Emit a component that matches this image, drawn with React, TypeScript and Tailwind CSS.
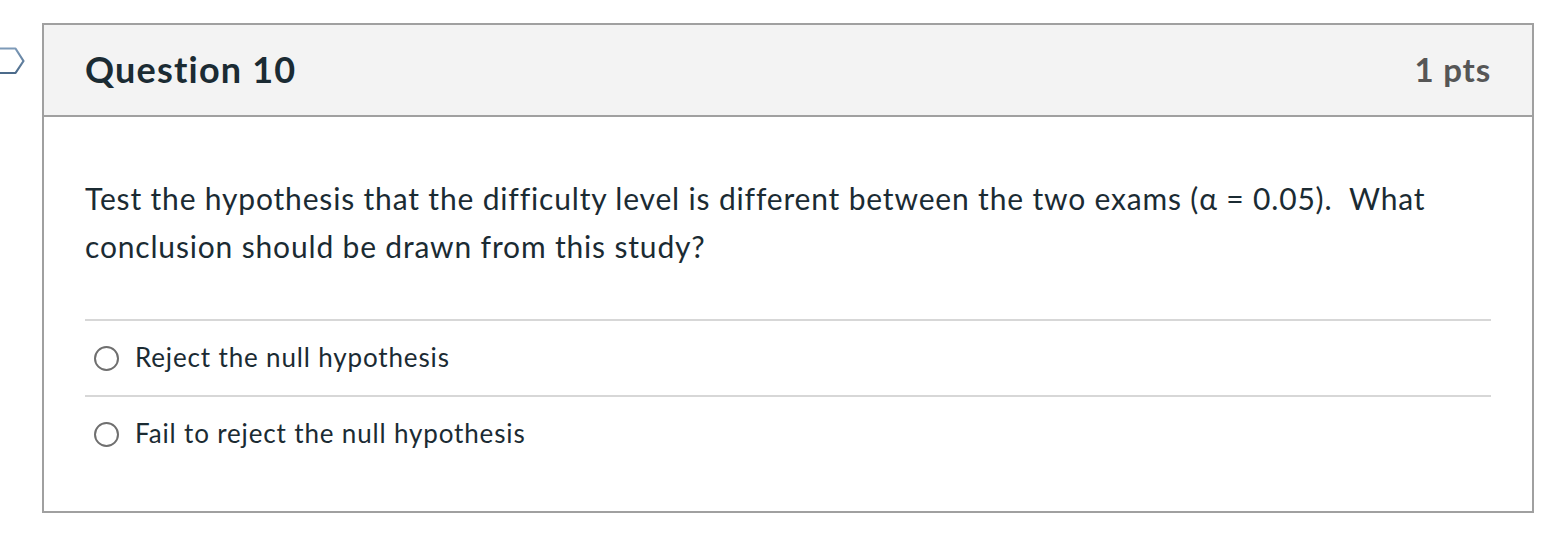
import React from "react";

function Radio() {
  return (
    <span className="flex h-[25px] w-[25px] shrink-0 items-center justify-center rounded-full border-2 border-[#6f6f6f] bg-white" />
  );
}

function Option({ label }: { label: string }) {
  return (
    <div className="flex h-[76px] items-center gap-[16px] border-t-2 border-[#d7d7d7] pl-[9px]">
      <Radio />
      <span className="pb-[2px] text-[26px] leading-none tracking-[0.85px] text-[#1b2b33]">{label}</span>
    </div>
  );
}

export default function App() {
  return (
    <div className="relative min-h-[536px] w-[1554px] bg-white" style={{ fontFamily: "Lato, 'Liberation Sans', sans-serif" }}>
      <svg className="absolute left-0 top-[46px]" width="26" height="30" viewBox="0 0 26 30">
        <defs>
          <linearGradient id="g" x1="0" y1="0" x2="0" y2="1">
            <stop offset="0" stopColor="#7d9ab8" />
            <stop offset="1" stopColor="#4b6a8a" />
          </linearGradient>
        </defs>
        <path d="M-4 2.5 H15.5 L23.5 15 L15.5 27 H-4" fill="white" stroke="url(#g)" strokeWidth="2.2" strokeLinejoin="round" />
      </svg>
      <div className="ml-[42px] pt-[23px]">
        <div className="w-[1492px] border-2 border-[#a0a0a0]">
          <div className="flex h-[92px] items-center justify-between border-b-2 border-[#a0a0a0] bg-[#f3f3f3] px-[41px]">
            <h2 className="pb-[2px] text-[36px] font-bold leading-none tracking-[1.2px] text-[#1b2b33]">Question 10</h2>
            <span className="pb-[2px] text-[33px] font-bold leading-none tracking-[0.8px] text-[#565656]">1 pts</span>
          </div>
          <div className="px-[41px] pb-[40px] pt-[57px]">
            <p className="text-[30px] leading-[48px] tracking-[0.83px] text-[#1b2b33]">
              Test the hypothesis that the difficulty level is different between the two exams (α = 0.05).&nbsp; What conclusion should be drawn from this study?
            </p>
            <div className="mt-[49px]">
              <Option label="Reject the null hypothesis" />
              <Option label="Fail to reject the null hypothesis" />
            </div>
          </div>
        </div>
      </div>
    </div>
  );
}
